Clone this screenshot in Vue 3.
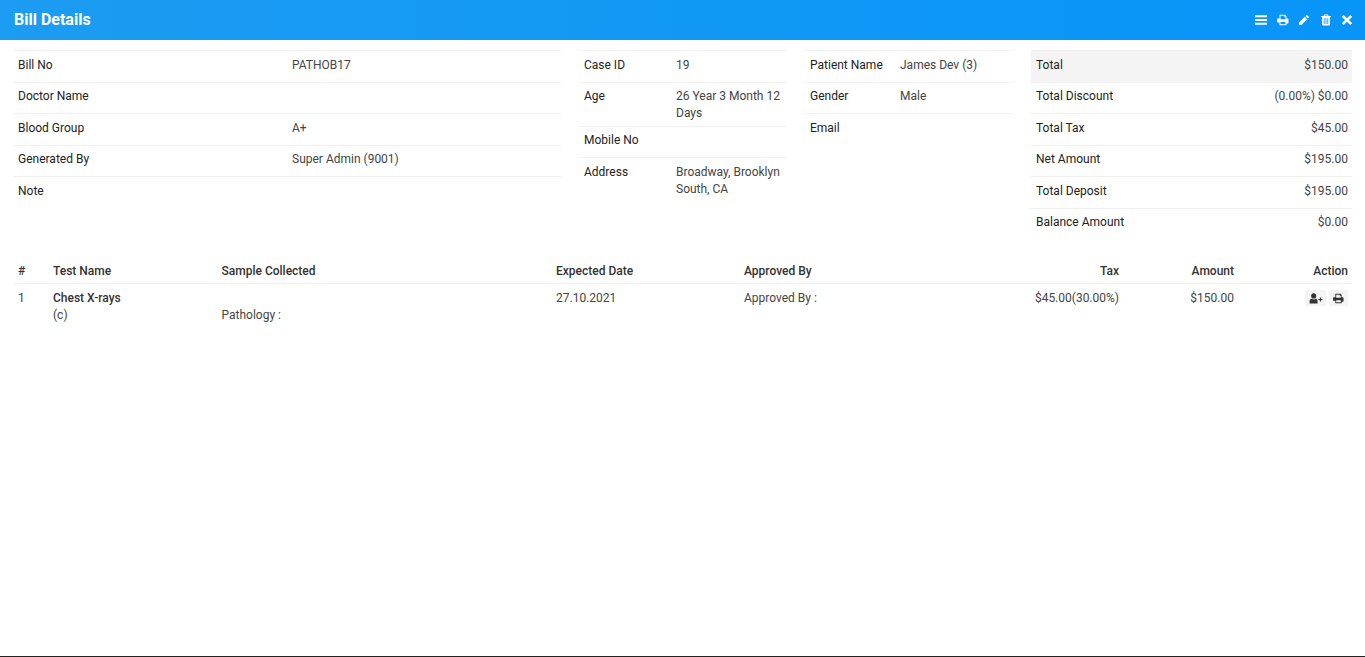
<script setup>
const billRows = [
  ['Bill No', 'PATHOB17'],
  ['Doctor Name', ''],
  ['Blood Group', 'A+'],
  ['Generated By', 'Super Admin (9001)'],
  ['Note', '']
]
const caseRows = [
  ['Case ID', '19'],
  ['Age', '26 Year 3 Month 12 Days'],
  ['Mobile No', ''],
  ['Address', 'Broadway, Brooklyn South, CA']
]
const patientRows = [
  ['Patient Name', 'James Dev (3)'],
  ['Gender', 'Male'],
  ['Email', '']
]
const totals = [
  ['Total', '$150.00'],
  ['Total Discount', '(0.00%) $0.00'],
  ['Total Tax', '$45.00'],
  ['Net Amount', '$195.00'],
  ['Total Deposit', '$195.00'],
  ['Balance Amount', '$0.00']
]
</script>

<template>
  <div class="page">
    <header class="topbar">
      <h1>Bill Details</h1>
      <div class="tools">
        <svg class="tool" viewBox="0 0 12 12"><path d="M0 1.200h12v2H0zM0 5h12v2H0zM0 8.800h12v2H0z" /></svg>
        <svg class="tool" viewBox="0 0 12 12"><path fill-rule="evenodd" d="M2.500.8h5.600l1.400 1.400v2.300h1.100c.5 0 .9.4.9.9v3.400c0 .4-.3.7-.7.700H9.500v1.700H2.500V8.500H.7c-.4 0-.7-.3-.7-.7V5.400c0-.5.4-.9.900-.9h1.600zM3.500 1.800v3.500h5V3H7.300V1.800zM3.500 8v2.200h5V8z" /></svg>
        <svg class="tool" viewBox="0 0 12 12"><path d="M8.700.8l2.500 2.500-1.300 1.300-2.500-2.500zM6.700 2.800l2.500 2.500-5.800 5.800H.9V8.600z" /></svg>
        <svg class="tool" viewBox="0 0 12 12"><path fill-rule="evenodd" d="M4.200.6h3.600l.7 1.400h2.400v1.100h-.9v7.400c0 .5-.4.9-.9.900H2.900c-.5 0-.9-.4-.9-.9V3.100h-.9V2h2.400zM4.400 2h3.200l-.3-.5H4.700zM3.800 4.200v5.800h.8V4.200zM5.600 4.200v5.800h.8V4.200zM7.400 4.200v5.800h.8V4.200z" /></svg>
        <svg class="tool" viewBox="0 0 12 12"><path d="M2.700 1L6 4.300 9.300 1l1.900 1.900L7.900 6l3.300 3.200-1.900 1.900L6 7.800l-3.300 3.300-1.900-1.900L4.100 6 .8 2.900z" /></svg>
      </div>
    </header>

    <main class="body">
      <section class="summary">
        <table class="info bill">
          <tbody>
            <tr v-for="r in billRows" :key="r[0]">
              <th>{{ r[0] }}</th>
              <td>{{ r[1] }}</td>
            </tr>
          </tbody>
        </table>
        <table class="info case">
          <tbody>
            <tr v-for="r in caseRows" :key="r[0]">
              <th>{{ r[0] }}</th>
              <td>{{ r[1] }}</td>
            </tr>
          </tbody>
        </table>
        <table class="info patient">
          <tbody>
            <tr v-for="r in patientRows" :key="r[0]">
              <th>{{ r[0] }}</th>
              <td>{{ r[1] }}</td>
            </tr>
          </tbody>
        </table>
        <table class="info totals">
          <tbody>
            <tr v-for="r in totals" :key="r[0]">
              <th>{{ r[0] }}</th>
              <td>{{ r[1] }}</td>
            </tr>
          </tbody>
        </table>
      </section>

      <table class="tests">
        <thead>
          <tr>
            <th class="c-num">#</th>
            <th class="c-name">Test Name</th>
            <th class="c-sample">Sample Collected</th>
            <th class="c-date">Expected Date</th>
            <th class="c-appr">Approved By</th>
            <th class="c-tax right">Tax</th>
            <th class="c-amt right">Amount</th>
            <th class="c-act right">Action</th>
          </tr>
        </thead>
        <tbody>
          <tr>
            <td>1</td>
            <td><b>Chest X-rays</b><br />(c)</td>
            <td><br />Pathology :</td>
            <td>27.10.2021</td>
            <td>Approved By :</td>
            <td class="right">$45.00(30.00%)</td>
            <td class="right">$150.00</td>
            <td class="right">
              <div class="actions">
                <span class="act wide">
                  <svg viewBox="0 0 14 12"><circle cx="4.500" cy="3.200" r="2.800" /><path d="M0 11.500V9.200C0 7.600 1 6.400 2.400 6.400c.7.500 1.500.8 2.300.8s1.400-.3 1.900-.8c1.200 0 2.100 1.200 2.100 2.800v2.300zM11.200 5h1.200v1.500H14v1.200h-1.600v1.500h-1.200V7.700H9.600V6.500h1.600z" /></svg>
                </span>
                <span class="act">
                  <svg viewBox="0 0 12 12"><path fill-rule="evenodd" d="M2.500.8h5.600l1.400 1.400v2.300h1.100c.5 0 .9.4.9.9v3.400c0 .4-.3.7-.7.700H9.500v1.700H2.500V8.500H.7c-.4 0-.7-.3-.7-.7V5.400c0-.5.4-.9.900-.9h1.600zM3.500 1.800v3.500h5V3H7.300V1.800zM3.500 8v2.200h5V8z" /></svg>
                </span>
              </div>
            </td>
          </tr>
        </tbody>
      </table>
    </main>
  </div>
</template>

<style>
html, body { margin: 0; background: #fff; }
</style>

<style scoped>
.page {
  display: flex;
  flex-direction: column;
  height: 657px;
  box-sizing: border-box;
  border-bottom: 1px solid #222;
  font-family: Roboto, "Liberation Sans", sans-serif;
  font-size: 12px;
  line-height: 17px;
  color: #444;
  overflow: hidden;
}

.topbar {
  display: flex;
  align-items: center;
  justify-content: space-between;
  height: 40px;
  flex: none;
  padding: 0 12px 0 14px;
  background: linear-gradient(90deg, #1c9cf2, #0795f8);
  color: #fff;
}

.topbar h1 {
  margin: 0;
  font-size: 16px;
  font-weight: 700;
  line-height: 40px;
}

.tools {
  display: flex;
  gap: 9.500px;
  align-items: center;
}

.tool {
  width: 12px;
  height: 12px;
  fill: #fff;
}

.body {
  flex: 1;
  padding: 10px 13px 0 14px;
}

.summary {
  display: grid;
  grid-template-columns: 547px 207px 206px 321px;
  gap: 19px;
  align-items: start;
  height: 207px;
}

table {
  border-collapse: collapse;
  width: 100%;
}

.info th,
.info td {
  box-sizing: border-box;
  height: 31.500px;
  padding: 5.500px 4px 3.500px;
  border-top: 1px solid #f1f1f1;
  text-align: left;
  vertical-align: top;
  font-weight: 400;
}

.info th {
  color: #222;
  white-space: nowrap;
}

.info { table-layout: fixed; }
.bill th { width: 274px; }
.case th { width: 92px; }
.patient th { width: 90px; }

.totals th,
.totals td { padding-left: 5px; }
.totals td { text-align: right; }
.totals tr:first-child th,
.totals tr:first-child td { background: #f4f4f4; }

.tests { table-layout: fixed; }

.tests th,
.tests td {
  padding: 6px 4px;
  text-align: left;
  vertical-align: top;
}

.tests th {
  padding-bottom: 3px;
  color: #333;
  font-weight: 500;
  border-bottom: 1px solid #f1f1f1;
}

.tests b { color: #333; font-weight: 500; }

.c-num { width: 27px; }
.c-name { width: 160.500px; }
.c-sample { width: 326.500px; }
.c-date { width: 180px; }
.c-appr { width: 220px; }
.c-tax { width: 147px; }
.c-amt { width: 107px; }

.tests .right { text-align: right; }

.actions {
  display: flex;
  justify-content: flex-end;
  gap: 3px;
  margin-top: 0;
}

.act {
  display: flex;
  align-items: center;
  justify-content: center;
  width: 19px;
  height: 16px;
  border-radius: 2px;
  background: #f4f4f4;
}

.act.wide { width: 21px; }

.act svg {
  width: 11px;
  height: 11px;
  fill: #333;
}

.act.wide svg { width: 14px; }
</style>
